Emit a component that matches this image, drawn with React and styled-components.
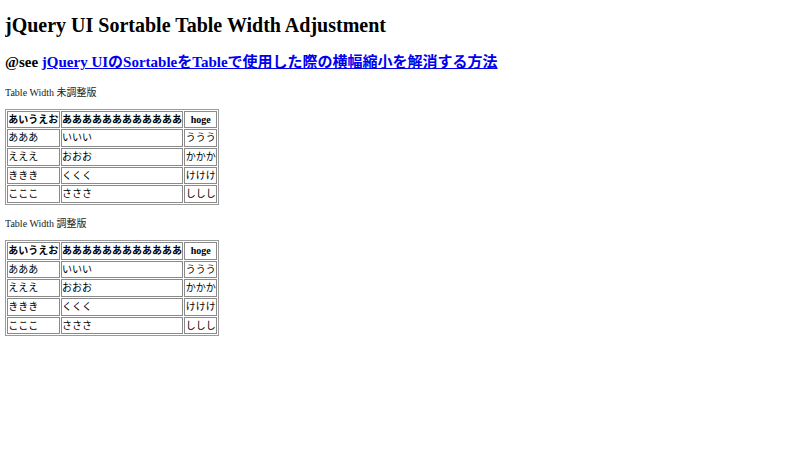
import React from "react";
import styled, { createGlobalStyle } from "styled-components";

const Global = createGlobalStyle`
  html, body { background: #fff; }
  body {
    margin: 5px;
    font-family: "Liberation Serif", "Noto Sans CJK JP", serif;
    font-size: 10px;
    color: #000;
  }
`;

const Title = styled.h1`
  font-size: 20px;
  font-weight: bold;
  margin: 9px 0 13.4px;
`;

const SubTitle = styled.h2`
  font-size: 15px;
  font-weight: bold;
  margin: 12.45px 0;
`;

const Link = styled.a`
  color: #0000ee;
  text-decoration: underline;
`;

const Caption = styled.p`
  margin: 10.5px 0 10px;
  color: #222;
`;

const Table = styled.table`
  border: 1px solid #9a9a9a;
  border-spacing: 1px;
  border-collapse: separate;
  font-size: 10px;
`;

const HeadCell = styled.th`
  border: 1px solid #8a8a8a;
  padding: 0 0.35px;
  line-height: 15.6px;
  font-weight: bold;
  text-align: center;
  white-space: nowrap;
`;

const Cell = styled.td`
  border: 1px solid #8a8a8a;
  padding: 0 0.35px;
  line-height: 15.6px;
  text-align: left;
  white-space: nowrap;
`;

const headers = ["あいうえお", "ああああああああああああ", "hoge"];
const rows = [
  ["あああ", "いいい", "ううう"],
  ["えええ", "おおお", "かかか"],
  ["ききき", "くくく", "けけけ"],
  ["こここ", "さささ", "ししし"],
];

function DataTable() {
  return (
    <Table>
      <thead>
        <tr>
          {headers.map((h) => (
            <HeadCell key={h}>{h}</HeadCell>
          ))}
        </tr>
      </thead>
      <tbody>
        {rows.map((r, i) => (
          <tr key={i}>
            {r.map((c) => (
              <Cell key={c}>{c}</Cell>
            ))}
          </tr>
        ))}
      </tbody>
    </Table>
  );
}

export default function App() {
  return (
    <>
      <Global />
      <Title>jQuery UI Sortable Table Width Adjustment</Title>
      <SubTitle>
        @see{" "}
        <Link href="#">
          jQuery UIのSortableをTableで使用した際の横幅縮小を解消する方法
        </Link>
      </SubTitle>
      <Caption>Table Width 未調整版</Caption>
      <DataTable />
      <Caption>Table Width 調整版</Caption>
      <DataTable />
    </>
  );
}
